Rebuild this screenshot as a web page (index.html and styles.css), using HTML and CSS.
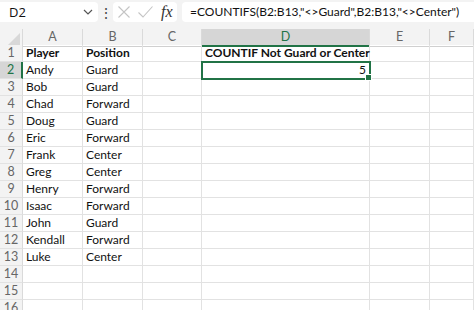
FILE: index.html
```html
<!DOCTYPE html>
<html lang="en">

<head>
    <meta charset="utf-8">
    <meta name="viewport" content="width=device-width, initial-scale=1.0">
    <title>COUNTIFS</title>

    <link rel="stylesheet" href="styles.css">
</head>

<body>
    <header class="formelbar">
        <div class="navnefelt">
            <span>D2</span>
            <svg class="pil" width="10" height="6" viewBox="0 0 10 6"><path d="M1 1 L5 5 L9 1" fill="none" stroke="#555" stroke-width="1.2"/></svg>
        </div>
        <span class="prikker">&#8942;</span>
        <div class="knapper">
            <svg width="12" height="12" viewBox="0 0 12 12"><path d="M0.5 0.5 L11.5 11.5 M11.5 0.5 L0.5 11.5" stroke="#c4c4c4" stroke-width="1.1"/></svg>
            <svg width="15" height="12" viewBox="0 0 15 12"><path d="M0.5 6.5 L5 11 L14.5 0.5" fill="none" stroke="#c4c4c4" stroke-width="1.1"/></svg>
            <span class="fx">fx</span>
        </div>
        <div class="formel">=COUNTIFS(B2:B13,"&lt;&gt;Guard",B2:B13,"&lt;&gt;Center")</div>
    </header>

    <main class="ark">
        <div class="raekke top">
            <div class="hjorne"><span class="trekant"></span></div>
            <div>A</div><div>B</div><div>C</div><div class="valgt">D</div><div>E</div><div>F</div>
        </div>
        <div class="raekke">
            <div class="nr">1</div><div class="fed">Player</div><div class="fed">Position</div><div></div><div class="fed">COUNTIF Not Guard or Center</div><div></div><div></div>
        </div>
        <div class="raekke">
            <div class="nr valgt">2</div><div>Andy</div><div>Guard</div><div></div><div class="aktiv">5</div><div></div><div></div>
        </div>
        <div class="raekke">
            <div class="nr">3</div><div>Bob</div><div>Guard</div><div></div><div></div><div></div><div></div>
        </div>
        <div class="raekke">
            <div class="nr">4</div><div>Chad</div><div>Forward</div><div></div><div></div><div></div><div></div>
        </div>
        <div class="raekke">
            <div class="nr">5</div><div>Doug</div><div>Guard</div><div></div><div></div><div></div><div></div>
        </div>
        <div class="raekke">
            <div class="nr">6</div><div>Eric</div><div>Forward</div><div></div><div></div><div></div><div></div>
        </div>
        <div class="raekke">
            <div class="nr">7</div><div>Frank</div><div>Center</div><div></div><div></div><div></div><div></div>
        </div>
        <div class="raekke">
            <div class="nr">8</div><div>Greg</div><div>Center</div><div></div><div></div><div></div><div></div>
        </div>
        <div class="raekke">
            <div class="nr">9</div><div>Henry</div><div>Forward</div><div></div><div></div><div></div><div></div>
        </div>
        <div class="raekke">
            <div class="nr">10</div><div>Isaac</div><div>Forward</div><div></div><div></div><div></div><div></div>
        </div>
        <div class="raekke">
            <div class="nr">11</div><div>John</div><div>Guard</div><div></div><div></div><div></div><div></div>
        </div>
        <div class="raekke">
            <div class="nr">12</div><div>Kendall</div><div>Forward</div><div></div><div></div><div></div><div></div>
        </div>
        <div class="raekke">
            <div class="nr">13</div><div>Luke</div><div>Center</div><div></div><div></div><div></div><div></div>
        </div>
        <div class="raekke">
            <div class="nr">14</div><div></div><div></div><div></div><div></div><div></div><div></div>
        </div>
        <div class="raekke">
            <div class="nr">15</div><div></div><div></div><div></div><div></div><div></div><div></div>
        </div>
        <div class="raekke">
            <div class="nr">16</div><div></div><div></div><div></div><div></div><div></div><div></div>
        </div>
    </main>
</body>

</html>
```

FILE: styles.css
```css
body {
    margin: 0;
    background-color: #f3f3f3;
    font-family: Lato, "Liberation Sans", sans-serif;
    color: #111;
    overflow: hidden;
}

.formelbar {
    display: flex;
    align-items: center;
    height: 29px;
    padding-bottom: 5px;
    box-sizing: border-box;
}

.navnefelt {
    flex-shrink: 0;
    display: flex;
    align-items: center;
    justify-content: space-between;
    width: 98px;
    height: 20px;
    padding: 0 5px 0 9px;
    box-sizing: border-box;
    background-color: white;
    border-radius: 0 4px 4px 0;
    font-family: "Open Sans", sans-serif;
    font-size: 13px;
}

.prikker {
    flex-shrink: 0;
    width: 15px;
    text-align: center;
    font-size: 14px;
    color: #444;
}

.knapper {
    flex-shrink: 0;
    display: flex;
    align-items: center;
    gap: 8px;
    width: 64px;
    height: 20px;
    padding-left: 5px;
    box-sizing: border-box;
    background-color: white;
    border-radius: 4px;
}

.fx {
    font-family: "Liberation Serif", serif;
    font-style: italic;
    font-size: 16px;
    color: #333;
}

.formel {
    flex: 1;
    min-width: 0;
    overflow: hidden;
    height: 20px;
    margin-left: 5px;
    padding-left: 8px;
    background-color: white;
    border-radius: 4px 0 0 4px;
    font-family: Lato, sans-serif;
    font-size: 12px;
    line-height: 20px;
    white-space: nowrap;
}

.ark {
    background-color: white;
}

.raekke {
    display: grid;
    grid-template-columns: 23px 60px 60px 59px 168px 60px 1fr;
    height: 17px;
}

.raekke > div {
    position: relative;
    border-right: 1px solid #e2e2e2;
    border-bottom: 1px solid #e2e2e2;
    padding: 0 3px;
    font-size: 12px;
    line-height: 16px;
    white-space: nowrap;
}

.raekke.top {
    height: 16px;
    background-color: #f3f3f3;
}

.raekke.top > div {
    text-align: center;
    color: #666;
    font-size: 12.5px;
    border-right-color: #dadada;
    border-bottom-color: #d0d0d0;
    line-height: 16px;
}

.raekke.top > .valgt {
    background-color: #d6d6d6;
    border-bottom: 2px solid #217346;
    color: #217346;
}

.raekke > .nr {
    padding: 0;
    text-align: center;
    font-size: 12.5px;
    color: #666;
    background-color: #f3f3f3;
    border-right-color: #dadada;
}

.raekke > .nr.valgt {
    background-color: #d6d6d6;
    border-right: 2px solid #217346;
    color: #217346;
}

.hjorne {
    display: flex;
    justify-content: flex-end;
    align-items: flex-end;
}

.trekant {
    width: 0;
    height: 0;
    border-left: 12px solid transparent;
    border-bottom: 12px solid #d8d8d8;
    margin: 0 -1px 1px 0;
}

.fed {
    font-weight: bold;
}

.aktiv {
    text-align: right;
    outline: 2px solid #217346;
    outline-offset: -1px;
    z-index: 1;
}

.aktiv::after {
    content: "";
    position: absolute;
    right: -3px;
    bottom: -3px;
    width: 5px;
    height: 5px;
    background-color: #217346;
    border: 1px solid white;
}
```
